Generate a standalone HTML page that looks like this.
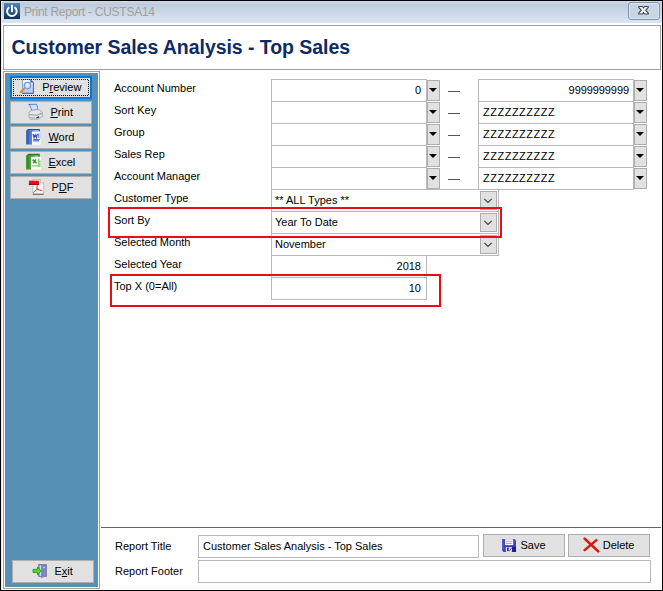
<!DOCTYPE html>
<html><head><meta charset="utf-8">
<style>
*{box-sizing:border-box;margin:0;padding:0}
html,body{width:663px;height:591px;overflow:hidden;background:#fff}
body{position:relative;font-family:"Liberation Sans",sans-serif;font-size:11px;color:#000}
.a{position:absolute}
.t{position:absolute;white-space:nowrap;line-height:13px;font-size:11px}
.frame{left:0;top:0;width:663px;height:591px;border:1px solid #000}
.titlebar{left:1px;top:1px;width:661px;height:22px;background:linear-gradient(#cfdbe9 0px,#bdcbdc 3px,#c6d3e2 8px,#d8e4f1 21px)}
.panel{border:1px solid #a0a0a0;background:#fff}
.side{left:3px;top:71px;width:97px;height:518px;border:1px solid #a0a0a0;background:#fff}
.sidein{left:5px;top:73px;width:93px;height:514px;background:#588fb5}
.btn{position:absolute;width:82px;height:23px;background:#e1e1e1;border:1px solid #adadad}
.btn.focus{border:2px solid #0078d7}
.fld{position:absolute;border:1px solid #b9b9b9;background:#fff;height:23px}
.dd{position:absolute;width:13px;height:21px;background:#e1e1e1;border:1px solid #adadad}
.dd i{position:absolute;left:1.1px;top:6.8px;width:0;height:0;border-left:4px solid transparent;border-right:4px solid transparent;border-top:4.6px solid #000}
.dash{position:absolute;left:448px;width:12px;height:1px;background:#555}
.cbtn{position:absolute;left:480px;width:17px;height:19px;background:#e1e1e1;border:1px solid #adadad}
.red{position:absolute;border:2px solid #ea0c16}
u{text-decoration:underline;text-decoration-thickness:1px;text-underline-offset:1px}
</style></head><body>
<div class="a frame"></div>
<div class="a titlebar"></div>
<div class="a" style="left:1px;top:1px;width:1px;height:589px;background:#e4eefa"></div>
<!-- title icon -->
<svg class="a" style="left:4px;top:3px" width="16" height="16" viewBox="0 0 16 16">
<defs><linearGradient id="pw" x1="0" y1="0" x2="0" y2="1"><stop offset="0" stop-color="#5289b8"/><stop offset="1" stop-color="#083058"/></linearGradient></defs>
<rect width="16" height="16" fill="url(#pw)"/>
<path d="M5.2 4.3 A4.8 4.8 0 1 0 10.6 4.3" fill="none" stroke="#fff" stroke-width="1.9"/>
<rect x="7" y="1.9" width="1.9" height="7.3" fill="#fff"/>
</svg>
<div class="t" style="left:24px;top:4.8px;font-size:12px;line-height:14px;letter-spacing:-0.26px;color:#a39d9d">Print Report - CUSTSA14</div>
<!-- close button -->
<div class="a" style="left:628px;top:2px;width:32px;height:18px;border:1px solid #8793ab;border-radius:3px;background:#c8d5e3;box-shadow:inset 0 0 0 1px #dbe5f0"></div>
<svg class="a" style="left:634px;top:3px" width="20" height="15" viewBox="0 0 20 15">
<path d="M5.1 4.1 L8.3 4.1 L9.5 6.0 L10.7 4.1 L13.9 4.1 L11.0 7.3 L13.9 10.5 L10.7 10.5 L9.5 8.6 L8.3 10.5 L5.1 10.5 L8.0 7.3 Z" fill="#3c4252" stroke="#3c4252" stroke-width="2.1" stroke-linejoin="round"/>
<path d="M5.1 4.1 L8.3 4.1 L9.5 6.0 L10.7 4.1 L13.9 4.1 L11.0 7.3 L13.9 10.5 L10.7 10.5 L9.5 8.6 L8.3 10.5 L5.1 10.5 L8.0 7.3 Z" fill="#f2f2f2"/>
</svg>
<!-- header -->
<div class="a panel" style="left:3px;top:25px;width:658px;height:45px"></div>
<div class="t" style="left:11.5px;top:36.2px;font-size:19.5px;line-height:22px;font-weight:bold;color:#0d2b63;letter-spacing:-0.05px">Customer Sales Analysis - Top Sales</div>

<!-- sidebar -->
<div class="a side"></div>
<div class="a sidein"></div>
<div class="btn focus" style="left:10px;top:76px"></div>
<div class="a" style="left:13px;top:95px;width:76px;height:1px;background:repeating-linear-gradient(90deg,#000 0 1px,transparent 1px 2px)"></div>
<div class="a" style="left:13px;top:79px;width:1px;height:17px;background:repeating-linear-gradient(180deg,#000 0 1px,transparent 1px 2px)"></div>
<div class="a" style="left:88px;top:80px;width:1px;height:15px;background:repeating-linear-gradient(180deg,#000 0 1px,transparent 1px 2px)"></div>
<div class="btn" style="left:10px;top:101px"></div>
<div class="btn" style="left:10px;top:126px"></div>
<div class="btn" style="left:10px;top:151px"></div>
<div class="btn" style="left:10px;top:176px"></div>
<div class="btn" style="left:12px;top:560px"></div>
<div class="t" style="left:42.2px;top:81px">P<u>r</u>eview</div>
<div class="t" style="left:50.4px;top:106px"><u>P</u>rint</div>
<div class="t" style="left:48.4px;top:131px"><u>W</u>ord</div>
<div class="t" style="left:48.4px;top:156px"><u>E</u>xcel</div>
<div class="t" style="left:51.4px;top:181px">P<u>D</u>F</div>
<div class="t" style="left:54.4px;top:565px">E<u>x</u>it</div>

<!-- labels -->
<div class="t" style="left:114px;top:82px">Account Number</div>
<div class="t" style="left:114px;top:104px">Sort Key</div>
<div class="t" style="left:114px;top:126px">Group</div>
<div class="t" style="left:114px;top:148px">Sales Rep</div>
<div class="t" style="left:114px;top:170px">Account Manager</div>
<div class="t" style="left:114px;top:192px">Customer Type</div>
<div class="t" style="left:114px;top:214px">Sort By</div>
<div class="t" style="left:114px;top:236px">Selected Month</div>
<div class="t" style="left:114px;top:258px">Selected Year</div>
<div class="t" style="left:114px;top:280px">Top X (0=All)</div>

<!-- range fields -->
<div class="fld" style="left:271px;top:79px;width:156px"></div>
<div class="fld" style="left:271px;top:101px;width:156px"></div>
<div class="fld" style="left:271px;top:123px;width:156px"></div>
<div class="fld" style="left:271px;top:145px;width:156px"></div>
<div class="fld" style="left:271px;top:167px;width:156px"></div>
<div class="dd" style="left:427px;top:80px"><i></i></div>
<div class="dd" style="left:427px;top:102px"><i></i></div>
<div class="dd" style="left:427px;top:124px"><i></i></div>
<div class="dd" style="left:427px;top:146px"><i></i></div>
<div class="dd" style="left:427px;top:168px"><i></i></div>
<div class="dash" style="top:91px"></div>
<div class="dash" style="top:113px"></div>
<div class="dash" style="top:135px"></div>
<div class="dash" style="top:157px"></div>
<div class="dash" style="top:179px"></div>
<div class="fld" style="left:478px;top:79px;width:156px"></div>
<div class="fld" style="left:478px;top:101px;width:156px"></div>
<div class="fld" style="left:478px;top:123px;width:156px"></div>
<div class="fld" style="left:478px;top:145px;width:156px"></div>
<div class="fld" style="left:478px;top:167px;width:156px"></div>
<div class="dd" style="left:634px;top:80px"><i></i></div>
<div class="dd" style="left:634px;top:102px"><i></i></div>
<div class="dd" style="left:634px;top:124px"><i></i></div>
<div class="dd" style="left:634px;top:146px"><i></i></div>
<div class="dd" style="left:634px;top:168px"><i></i></div>
<div class="t" style="left:371px;top:84px;width:50px;text-align:right">0</div>
<div class="t" style="left:529px;top:84px;width:100px;text-align:right;letter-spacing:-0.08px">9999999999</div>
<div class="t" style="left:483px;top:106px;letter-spacing:0.5px">ZZZZZZZZZZ</div>
<div class="t" style="left:483px;top:128px;letter-spacing:0.5px">ZZZZZZZZZZ</div>
<div class="t" style="left:483px;top:150px;letter-spacing:0.5px">ZZZZZZZZZZ</div>
<div class="t" style="left:483px;top:172px;letter-spacing:0.5px">ZZZZZZZZZZ</div>

<!-- combos -->
<div class="fld" style="left:271px;top:189px;width:228px"></div>
<div class="fld" style="left:271px;top:211px;width:228px"></div>
<div class="fld" style="left:271px;top:233px;width:228px"></div>
<div class="cbtn" style="top:191px"></div>
<div class="cbtn" style="top:213px"></div>
<div class="cbtn" style="top:235px"></div>
<div class="t" style="left:275px;top:194px">** ALL Types **</div>
<div class="t" style="left:275px;top:216px">Year To Date</div>
<div class="t" style="left:275px;top:238px">November</div>
<div class="fld" style="left:271px;top:255px;width:156px"></div>
<div class="fld" style="left:271px;top:277px;width:156px"></div>
<div class="t" style="left:371px;top:260px;width:50px;text-align:right">2018</div>
<div class="t" style="left:371px;top:282px;width:50px;text-align:right">10</div>

<!-- red boxes -->
<div class="red" style="left:108px;top:207px;width:394px;height:31px"></div>
<div class="red" style="left:110px;top:274px;width:331px;height:33px"></div>

<!-- bottom -->
<div class="a" style="left:101px;top:527px;width:560px;height:1px;background:#646464"></div>
<div class="t" style="left:115px;top:540px">Report Title</div>
<div class="t" style="left:115px;top:565px">Report Footer</div>
<div class="fld" style="left:198px;top:535px;width:281px"></div>
<div class="t" style="left:203px;top:540px">Customer Sales Analysis - Top Sales</div>
<div class="fld" style="left:198px;top:560px;width:453px"></div>
<div class="btn" style="left:483px;top:534px"></div>
<div class="btn" style="left:568px;top:534px"></div>
<div class="t" style="left:520.5px;top:539.1px">Save</div>
<div class="t" style="left:602.7px;top:539.1px">Delete</div>

<!-- icons -->
<svg class="a" style="left:16px;top:77px" width="20" height="20" viewBox="0 0 20 20">
<defs><linearGradient id="pg" x1="0" y1="0" x2="0" y2="1"><stop offset="0" stop-color="#ffffff"/><stop offset="1" stop-color="#a8c4f2"/></linearGradient>
<radialGradient id="lens" cx="0.45" cy="0.4" r="0.6"><stop offset="0" stop-color="#f0ffff"/><stop offset="1" stop-color="#98dcf4"/></radialGradient></defs>
<path d="M6.5 2.6 H14.6 L17.4 5.2 V16.4 H6.5 Z" fill="url(#pg)" stroke="#6f8fd8" stroke-width="0.8"/>
<path d="M14.6 2.6 V5.2 H17.4" fill="#4f6fc8" stroke="#4f6fc8" stroke-width="0.8"/>
<path d="M6.5 16.4 H17.4 V5.5" fill="none" stroke="#4858b8" stroke-width="0.9"/>
<circle cx="11.5" cy="8.6" r="3.2" fill="url(#lens)" stroke="#7898dc" stroke-width="1.3"/>
<path d="M4.7 15.2 L7.9 12" stroke="#ec8a20" stroke-width="2.2" stroke-linecap="round"/>
</svg>
<svg class="a" style="left:26px;top:102px" width="20" height="20" viewBox="0 0 20 20">
<path d="M3.3 2.4 L10.6 2.3 L12 7.6 L6.2 8.8 Z" fill="#cfe2fc" stroke="#5a8ae8" stroke-width="1"/>
<rect x="2.7" y="1.9" width="1" height="1" fill="#303080"/>
<path d="M3 10 L6.3 8.2 L13 7.6 L16.4 10.4 V14.6 L12 17.2 H4.6 L3 15.2 Z" fill="#e6e6e6" stroke="#a0a0a0" stroke-width="0.8"/>
<path d="M3.4 12.6 L11 13.2 L16 11.2" fill="none" stroke="#8c8c8c" stroke-width="0.9"/>
<path d="M4 15.5 L9 16" stroke="#aaa" stroke-width="1"/>
<path d="M10.3 16 L13.2 14.8" stroke="#202058" stroke-width="1.3"/>
<rect x="14.2" y="11.8" width="0.9" height="0.9" fill="#70b070"/>
</svg>
<svg class="a" style="left:24px;top:127px" width="20" height="20" viewBox="0 0 20 20">
<defs><linearGradient id="wb" x1="0" y1="0" x2="1" y2="0"><stop offset="0" stop-color="#2a50b0"/><stop offset="0.5" stop-color="#6f92dc"/><stop offset="1" stop-color="#b8ccf0"/></linearGradient></defs>
<path d="M3.8 2 H15.6 V4.8 H8 V17.6 H2.2 V3.8 Z" fill="url(#wb)"/>
<path d="M4.2 2.5 H15.3 V4.5" fill="none" stroke="#2848a8" stroke-width="1.1"/>
<rect x="8" y="4.8" width="8.6" height="12.8" fill="#fff"/>
<path d="M16.3 5 V12" stroke="#c0c8d8" stroke-width="0.8"/>
<path d="M9 6.9 L10 10.5 L11.2 7.8 L12.4 10.5 L13.4 6.9" fill="none" stroke="#3658c0" stroke-width="1.3"/>
<path d="M14 7.2 H15.4 M14 8.8 H15.4 M14 10.2 H15.4" stroke="#3658c0" stroke-width="1"/>
<path d="M9.2 12.5 H15.8 M9.2 13.9 H15" stroke="#4a6cd0" stroke-width="1.1"/>
</svg>
<svg class="a" style="left:24px;top:152px" width="20" height="20" viewBox="0 0 20 20">
<defs><linearGradient id="xb" x1="0" y1="0" x2="1" y2="0"><stop offset="0" stop-color="#2a8020"/><stop offset="0.5" stop-color="#62b450"/><stop offset="1" stop-color="#b0e0a0"/></linearGradient></defs>
<path d="M3.8 2 H15.6 V5 H7.2 V17.6 H2.2 V3.8 Z" fill="url(#xb)"/>
<path d="M4.2 2.5 H15 V4.8" fill="none" stroke="#2a7a1e" stroke-width="1.3"/>
<rect x="7.2" y="5" width="9.8" height="12.6" fill="#fff"/>
<path d="M8.6 7.6 L12.6 11.2 M12 7.6 L9.2 11.2" stroke="#3a9a2a" stroke-width="1.7"/>
<path d="M14.8 6.5 V15 M8.2 13.8 H16.8 M14 9.5 H16.8 M14 11.8 H16.8" stroke="#84c870" stroke-width="1.3"/>
</svg>
<svg class="a" style="left:26px;top:177px" width="20" height="20" viewBox="0 0 20 20">
<path d="M6.8 2.4 H14.4 L17.7 5.8 V17.6 H6.8 Z" fill="#f4f4f4" stroke="#b8b8b8" stroke-width="0.8"/>
<path d="M14.4 2.4 V5.8 H17.7" fill="#fff" stroke="#aaa" stroke-width="0.8"/>
<path d="M7 17.2 H17.5" stroke="#333" stroke-width="0.8"/>
<rect x="2.9" y="3.7" width="10" height="4.3" fill="#e8101a"/>
<rect x="2.9" y="6.8" width="10" height="1.2" fill="#9a0a10"/>
<path d="M11.5 8 L10.5 12.5 L7.3 15.8 M10.5 12.5 L16.2 13.6 M11.2 10.8 L12.5 12.8" fill="none" stroke="#e04850" stroke-width="1"/>
</svg>
<svg class="a" style="left:30px;top:561px" width="20" height="20" viewBox="0 0 20 20">
<rect x="8.3" y="3.2" width="8.5" height="12.6" fill="#6a6a70"/>
<rect x="9.5" y="4.3" width="1.5" height="10.5" fill="#bfe8ff"/>
<path d="M11 4 L16.6 3.6 V15.6 L11 17 Z" fill="#8282c8"/>
<rect x="13" y="6.2" width="2" height="0.9" fill="#d8d8f0"/>
<path d="M3 8.4 H7.4 V6 L11.2 9.9 L7.4 13.8 V11.4 H3 Z" fill="#54d838" stroke="#14a014" stroke-width="0.9"/>
</svg>
<svg class="a" style="left:499px;top:536px" width="20" height="20" viewBox="0 0 20 20">
<path d="M3 2.9 H15.5 L17 4.4 V15.9 H4.5 L3 14.4 Z" fill="#4040c4"/>
<rect x="3" y="2.9" width="1.4" height="12" fill="#5a5ad8"/>
<rect x="6.1" y="3.2" width="8.1" height="5.9" fill="#fff"/>
<path d="M7 5.3 H13.3 M7 7.4 H13.3" stroke="#9a9a9a" stroke-width="0.9"/>
<rect x="6.8" y="11.2" width="6.1" height="4.7" fill="#e8e8e8"/>
<rect x="8" y="11.6" width="1.8" height="3.5" fill="#3030b0"/>
<path d="M10.5 15 L12.5 12" stroke="#404040" stroke-width="0.8"/>
<rect x="13.2" y="10.6" width="3.8" height="5.3" fill="#1a1aa0"/>
</svg>
<svg class="a" style="left:581px;top:535px" width="20" height="20" viewBox="0 0 20 20">
<path d="M3.6 3.6 L17.2 16.4" stroke="#e81000" stroke-width="2.6" stroke-linecap="round"/>
<path d="M15.4 5.2 L3.6 15.2" stroke="#e41000" stroke-width="2.4" stroke-linecap="round"/>
</svg>
<!-- combo chevrons -->
<svg class="a" style="left:0;top:0" width="663" height="300" viewBox="0 0 663 300">
<path d="M484.3 198.8 L488 202.5 L491.7 198.8 M484.3 220.8 L488 224.5 L491.7 220.8 M484.3 242.8 L488 246.5 L491.7 242.8" fill="none" stroke="#404040" stroke-width="1.1"/>
</svg>
<div class="a" style="left:13px;top:79px;width:76px;height:1px;background:repeating-linear-gradient(90deg,#000 0 1px,transparent 1px 2px);opacity:0.85"></div>
</body></html>
